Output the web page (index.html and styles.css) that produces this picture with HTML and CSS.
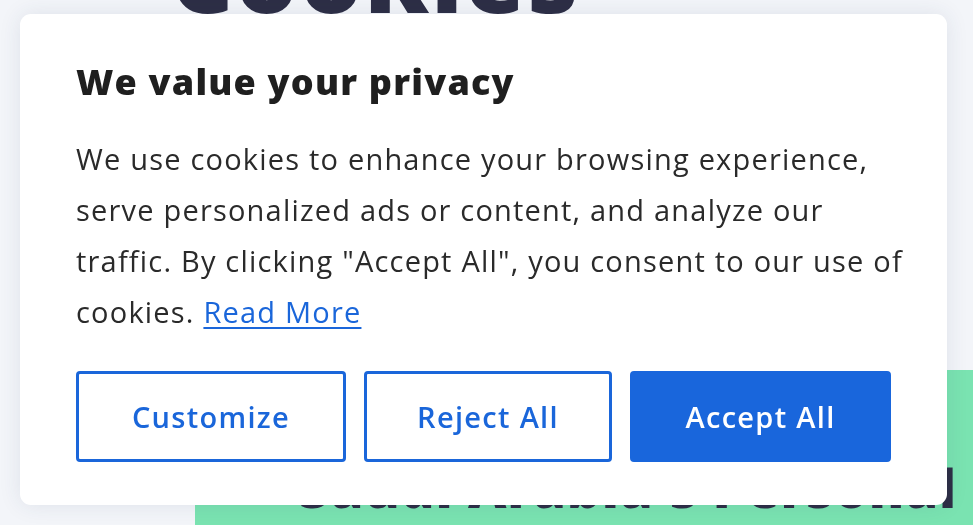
FILE: index.html
```html
<!DOCTYPE html>
<html lang="en">
<head>
<meta charset="utf-8">
<title>Cookies</title>
<link rel="stylesheet" href="styles.css">
</head>
<body>
<main class="page">
  <h1 class="page-title">Cookies</h1>
  <section class="hero">
    <h2 class="hero-title">Saudi Arabia's Personal</h2>
  </section>
</main>

<div class="consent" role="dialog" aria-label="Cookie consent">
  <h2 class="consent-title">We value your privacy</h2>
  <p class="consent-text">We use cookies to enhance your browsing experience,<br>serve personalized ads or content, and analyze our<br>traffic. By clicking "Accept All", you consent to our use of<br>cookies. <a href="#" class="consent-link">Read More</a></p>
  <div class="consent-actions">
    <button class="btn btn-outline btn-customize">Customize</button>
    <button class="btn btn-outline btn-reject">Reject All</button>
    <button class="btn btn-solid btn-accept">Accept All</button>
  </div>
</div>
</body>
</html>
```

FILE: styles.css
```css
* { box-sizing: border-box; }

html, body {
  margin: 0;
  height: 525px;
  overflow: hidden;
}

body {
  background: #f3f5f9;
  font-family: "Open Sans", "DejaVu Sans", sans-serif;
}

.page {
  display: flex;
  flex-direction: column;
  height: 525px;
  overflow: hidden;
}

.page-title {
  margin: -74px 0 0 170px;
  font-size: 98px;
  line-height: 98px;
  font-weight: 800;
  color: #2d2e45;
  letter-spacing: 2px;
}

.hero {
  margin: 346px 0 0 195px;
  height: 155px;
  flex: none;
  background: #7ae3b1;
  padding: 85px 0 0 104px;
  overflow: hidden;
}

.hero-title {
  margin: 0;
  font-size: 53px;
  line-height: 66px;
  font-weight: 800;
  color: #2d2e45;
  white-space: nowrap;
  letter-spacing: 0.8px;
}

.consent {
  position: fixed;
  z-index: 10;
  left: 20px;
  top: 14px;
  width: 927px;
  height: 491px;
  background: #fff;
  border-radius: 11px;
  box-shadow: 0 0 22px rgba(40, 55, 100, 0.10);
  padding: 46px 56px 0 56px;
  display: flex;
  flex-direction: column;
}

.consent-title {
  margin: 0;
  font-size: 36px;
  line-height: 44px;
  font-weight: 800;
  color: #1f1f1f;
  letter-spacing: 1.2px;
}

.consent-text {
  margin: 29px 0 0 0;
  font-size: 29px;
  line-height: 51px;
  color: #2a2a2a;
  letter-spacing: 1.2px;
  white-space: nowrap;
}

.consent-link {
  color: #1a66da;
  text-decoration: underline;
  text-underline-offset: 4px;
  text-decoration-thickness: 2px;
}

.consent-actions {
  display: flex;
  gap: 18px;
  margin-top: 34px;
}

.btn {
  height: 91px;
  border-radius: 4px;
  font-family: inherit;
  font-size: 29px;
  font-weight: 600;
  letter-spacing: 1.3px;
  cursor: pointer;
}

.btn-outline {
  background: #fff;
  border: 3px solid #1a66da;
  color: #1a66da;
}

.btn-solid {
  background: #1966dc;
  border: 3px solid #1966dc;
  color: #fff;
}

.btn-customize { width: 270px; }
.btn-reject { width: 248px; }
.btn-accept { width: 261px; }
```
